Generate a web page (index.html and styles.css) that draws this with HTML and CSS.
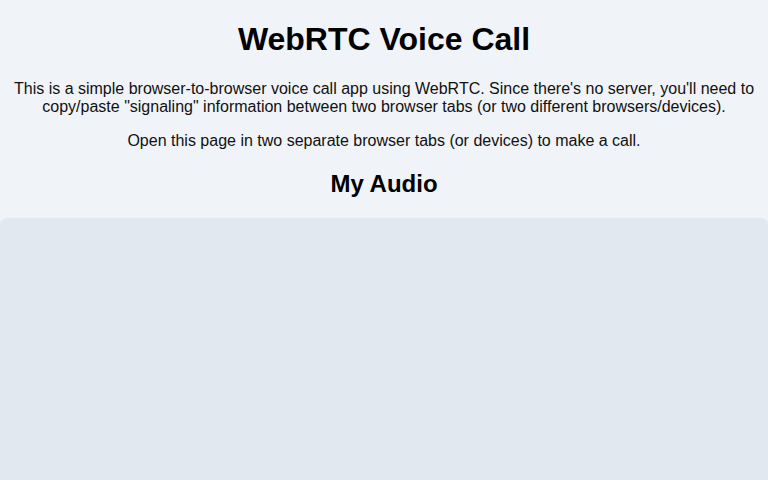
FILE: index.html
```html
<!DOCTYPE html>
<html lang="en">
<head>
  <meta charset="UTF-8">
  <meta name="viewport" content="width=device-width, initial-scale=1.0">
  <title>WebRTC Voice Call</title>
  <link rel="stylesheet" href="styles.css">
</head>
<body>
  <h1>WebRTC Voice Call</h1>
  <p>This is a simple browser-to-browser voice call app using WebRTC. Since there's no server, you'll need to copy/paste "signaling" information between two browser tabs (or two different browsers/devices).</p>
  <p>Open this page in two separate browser tabs (or devices) to make a call.</p>

  <h2>My Audio</h2>
  <div class="audio-panel" id="localPanel"></div>
</body>
</html>
```

FILE: styles.css
```css
body {
  font-family: "Liberation Sans", Arial, sans-serif;
  background: #f0f4f8;
  color: #111;
  margin: 0;
  text-align: center;
}
h1, h2 {
  color: #000;
}
.audio-panel {
  background: #e2e8f0;
  border-radius: 8px;
  box-shadow: 0 1px 3px rgba(0, 0, 0, 0.08);
  min-height: 320px;
  text-align: left;
}
```
